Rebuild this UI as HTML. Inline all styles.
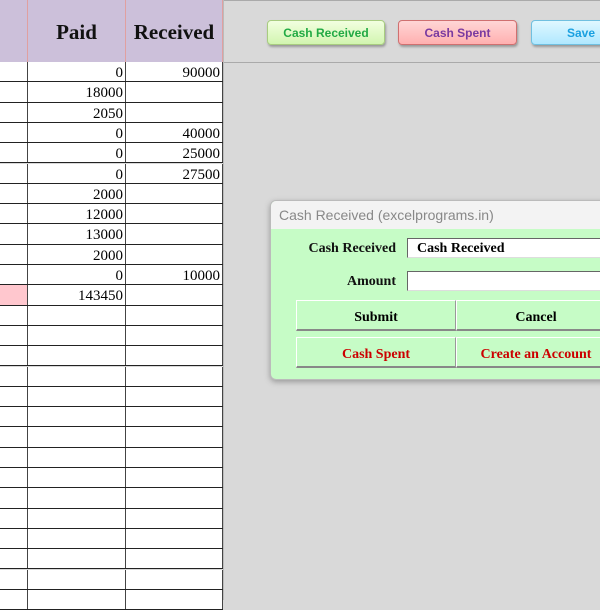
<html><head><style>
body{margin:0;width:600px;height:600px;overflow:hidden;background:#d9d9d9;position:relative;font-family:"Liberation Serif",serif}
.hdr{position:absolute;top:0;height:62px;background:#ccc0da;border-right:1px solid #e0a0a0;box-sizing:border-box;font-weight:bold;font-size:21px;color:#111;text-align:center;line-height:64px}
.row{position:absolute;left:0;width:223px;height:20.3px;border-bottom:1px solid #222;box-sizing:border-box;background:#fff;font-size:15px}
.row div{position:absolute;top:0;height:100%;border-right:1px solid #444;box-sizing:border-box;text-align:right;padding-right:2px;line-height:23px;overflow:hidden}
.btn{position:absolute;top:20px;height:25px;border-radius:4px;font-family:"Liberation Sans",sans-serif;font-weight:bold;font-size:12px;text-align:center;line-height:25px;box-shadow:1px 2px 2px #999;box-sizing:border-box}
.dlg{position:absolute;left:270px;top:200px;width:340px;height:178px;background:#c6fcc6;border:1px solid #bbb;border-radius:6px;box-shadow:0 2px 6px #999;overflow:hidden}
.tb{height:28px;background:#f3f3f3;color:#888;font-family:"Liberation Sans",sans-serif;font-size:14px;line-height:28px;padding-left:8px}
.lb{position:absolute;font-weight:bold;font-size:14px;color:#111;text-align:right;width:120px}
.in{position:absolute;left:136px;width:210px;height:20px;background:#fff;border:1px solid #666;border-right:none;border-bottom-color:#ddd;box-sizing:border-box;font-weight:bold;font-size:14px;padding-left:9px;line-height:20px}
.db{position:absolute;height:31px;border:1px solid #999;border-top-color:#fff;border-left-color:#fff;border-bottom:2px solid #888;box-sizing:border-box;font-weight:bold;font-size:14px;text-align:center;line-height:33px}
</style></head><body>
<div style="position:absolute;left:0;top:0;width:600px;height:1px;background:#aaa"></div>
<div style="position:absolute;left:223px;top:62px;width:377px;height:1px;background:#aaa"></div>
<div class="hdr" style="left:0;width:28px"></div>
<div class="hdr" style="left:28px;width:98px">Paid</div>
<div class="hdr" style="left:126px;width:97px">Received</div>
<div style="position:absolute;left:223px;top:0;width:1px;height:600px;background:#bbb"></div>
<div id="rows"></div>
<script>
var d=[["0","90000"],["18000",""],["2050",""],["0","40000"],["0","25000"],["0","27500"],["2000",""],["12000",""],["13000",""],["2000",""],["0","10000"],["143450",""]];
var h="";for(var i=0;i<27;i++){var r=d[i]||["",""];h+='<div class="row" style="top:'+(62+i*20.3)+'px"><div style="left:0;width:28px;'+(i==11?'background:#ffc7ce':'')+'"></div><div style="left:28px;width:98px">'+r[0]+'</div><div style="left:126px;width:97px">'+r[1]+'</div></div>';}
document.getElementById("rows").innerHTML=h;
</script>
<div class="btn" style="left:267px;width:118px;background:linear-gradient(#f2ffe0,#d2f5b0);border:1px solid #a8cc80;color:#22aa44">Cash Received</div>
<div class="btn" style="left:398px;width:119px;background:linear-gradient(#ffd6d6,#ffb0b0);border:1px solid #d07070;color:#7a3aa0">Cash Spent</div>
<div class="btn" style="left:531px;width:100px;background:linear-gradient(#e0f8ff,#b0e8ff);border:1px solid #70c0e0;color:#1aa0e0">Save</div>
<div class="dlg">
<div class="tb">Cash Received (excelprograms.in)</div>
<div class="lb" style="left:5px;top:40px">Cash Received</div>
<div class="in" style="top:37px">Cash Received</div>
<div class="lb" style="left:5px;top:73px">Amount</div>
<div class="in" style="top:70px"></div>
<div class="db" style="left:25px;top:99px;width:160px">Submit</div>
<div class="db" style="left:185px;top:99px;width:160px">Cancel</div>
<div class="db" style="left:25px;top:136px;width:160px;color:#c00">Cash Spent</div>
<div class="db" style="left:185px;top:136px;width:160px;color:#c00">Create an Account</div>
</div>
</body></html>
